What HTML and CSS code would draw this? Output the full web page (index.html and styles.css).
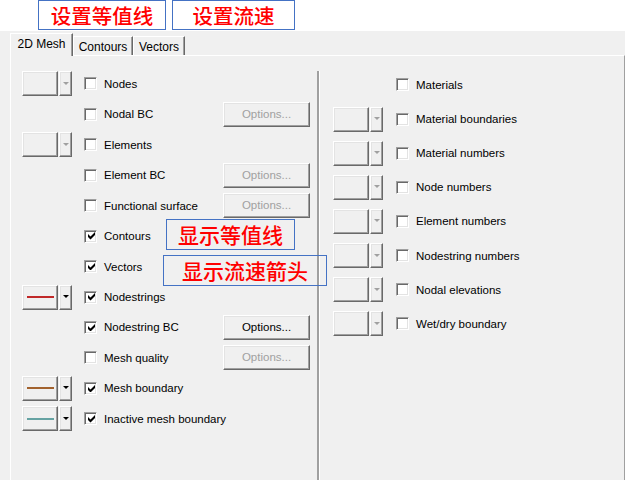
FILE: index.html
```html
<!DOCTYPE html>
<html>
<head>
<meta charset="utf-8">
<link rel="stylesheet" href="styles.css">
</head>
<body>
<div class="top">
  <div class="note note-a">设置等值线</div>
  <div class="note note-b">设置流速</div>
</div>
<div class="dialog">
  <div class="tabs">
    <div class="tab tab-active tab-mesh">2D Mesh</div>
    <div class="tab tab-contours">Contours</div>
    <div class="tab tab-vectors">Vectors</div>
  </div>
  <div class="panel">
    <div class="col-left">
      <div class="row">
        <div class="cbtn"><div class="cbtn-main"></div><div class="cbtn-arrow"><span class="tri tri-off"></span></div></div>
        <div class="check"><span class="box"></span><span class="lbl">Nodes</span></div>
        <div></div>
      </div>
      <div class="row">
        <div></div>
        <div class="check"><span class="box"></span><span class="lbl">Nodal BC</span></div>
        <div class="btn btn-off">Options...</div>
      </div>
      <div class="row">
        <div class="cbtn"><div class="cbtn-main"></div><div class="cbtn-arrow"><span class="tri tri-off"></span></div></div>
        <div class="check"><span class="box"></span><span class="lbl">Elements</span></div>
        <div></div>
      </div>
      <div class="row">
        <div></div>
        <div class="check"><span class="box"></span><span class="lbl">Element BC</span></div>
        <div class="btn btn-off">Options...</div>
      </div>
      <div class="row">
        <div></div>
        <div class="check"><span class="box"></span><span class="lbl">Functional surface</span></div>
        <div class="btn btn-off">Options...</div>
      </div>
      <div class="row">
        <div></div>
        <div class="check"><span class="box box-on"><svg viewBox="0 0 7 7.5" width="7" height="7.5"><polygon points="0,2 2.5,4.5 7,0 7,3 2.5,7.5 0,5" fill="#000"/></svg></span><span class="lbl">Contours</span></div>
        <div></div>
      </div>
      <div class="row">
        <div></div>
        <div class="check"><span class="box box-on"><svg viewBox="0 0 7 7.5" width="7" height="7.5"><polygon points="0,2 2.5,4.5 7,0 7,3 2.5,7.5 0,5" fill="#000"/></svg></span><span class="lbl">Vectors</span></div>
        <div></div>
      </div>
      <div class="row">
        <div class="cbtn"><div class="cbtn-main"><span class="swatch swatch-red"></span></div><div class="cbtn-arrow"><span class="tri"></span></div></div>
        <div class="check"><span class="box box-on"><svg viewBox="0 0 7 7.5" width="7" height="7.5"><polygon points="0,2 2.5,4.5 7,0 7,3 2.5,7.5 0,5" fill="#000"/></svg></span><span class="lbl">Nodestrings</span></div>
        <div></div>
      </div>
      <div class="row">
        <div></div>
        <div class="check"><span class="box box-on"><svg viewBox="0 0 7 7.5" width="7" height="7.5"><polygon points="0,2 2.5,4.5 7,0 7,3 2.5,7.5 0,5" fill="#000"/></svg></span><span class="lbl">Nodestring BC</span></div>
        <div class="btn">Options...</div>
      </div>
      <div class="row">
        <div></div>
        <div class="check"><span class="box"></span><span class="lbl">Mesh quality</span></div>
        <div class="btn btn-off">Options...</div>
      </div>
      <div class="row">
        <div class="cbtn"><div class="cbtn-main"><span class="swatch swatch-brown"></span></div><div class="cbtn-arrow"><span class="tri"></span></div></div>
        <div class="check"><span class="box box-on"><svg viewBox="0 0 7 7.5" width="7" height="7.5"><polygon points="0,2 2.5,4.5 7,0 7,3 2.5,7.5 0,5" fill="#000"/></svg></span><span class="lbl">Mesh boundary</span></div>
        <div></div>
      </div>
      <div class="row">
        <div class="cbtn"><div class="cbtn-main"><span class="swatch swatch-teal"></span></div><div class="cbtn-arrow"><span class="tri"></span></div></div>
        <div class="check"><span class="box box-on"><svg viewBox="0 0 7 7.5" width="7" height="7.5"><polygon points="0,2 2.5,4.5 7,0 7,3 2.5,7.5 0,5" fill="#000"/></svg></span><span class="lbl">Inactive mesh boundary</span></div>
        <div></div>
      </div>
    </div>
    <div class="divider"></div>
    <div class="col-right">
      <div class="rrow">
        <div></div>
        <div class="check"><span class="box"></span><span class="lbl">Materials</span></div>
      </div>
      <div class="rrow">
        <div class="cbtn"><div class="cbtn-main"></div><div class="cbtn-arrow"><span class="tri tri-off"></span></div></div>
        <div class="check"><span class="box"></span><span class="lbl">Material boundaries</span></div>
      </div>
      <div class="rrow">
        <div class="cbtn"><div class="cbtn-main"></div><div class="cbtn-arrow"><span class="tri tri-off"></span></div></div>
        <div class="check"><span class="box"></span><span class="lbl">Material numbers</span></div>
      </div>
      <div class="rrow">
        <div class="cbtn"><div class="cbtn-main"></div><div class="cbtn-arrow"><span class="tri tri-off"></span></div></div>
        <div class="check"><span class="box"></span><span class="lbl">Node numbers</span></div>
      </div>
      <div class="rrow">
        <div class="cbtn"><div class="cbtn-main"></div><div class="cbtn-arrow"><span class="tri tri-off"></span></div></div>
        <div class="check"><span class="box"></span><span class="lbl">Element numbers</span></div>
      </div>
      <div class="rrow">
        <div class="cbtn"><div class="cbtn-main"></div><div class="cbtn-arrow"><span class="tri tri-off"></span></div></div>
        <div class="check"><span class="box"></span><span class="lbl">Nodestring numbers</span></div>
      </div>
      <div class="rrow">
        <div class="cbtn"><div class="cbtn-main"></div><div class="cbtn-arrow"><span class="tri tri-off"></span></div></div>
        <div class="check"><span class="box"></span><span class="lbl">Nodal elevations</span></div>
      </div>
      <div class="rrow">
        <div class="cbtn"><div class="cbtn-main"></div><div class="cbtn-arrow"><span class="tri tri-off"></span></div></div>
        <div class="check"><span class="box"></span><span class="lbl">Wet/dry boundary</span></div>
      </div>
    </div>
    <div class="callout callout-contours">显示等值线</div>
    <div class="callout callout-vectors">显示流速箭头</div>
  </div>
</div>
</body>
</html>
```
FILE: styles.css
```css
* { box-sizing: border-box; }
html, body {
  margin: 0;
  padding: 0;
}
body {
  width: 625px;
  height: 480px;
  overflow: hidden;
  background: #f0f0f0;
  font-family: "Liberation Sans", Arial, sans-serif;
  font-size: 11.5px;
  color: #000;
}
.top {
  height: 31px;
  background: #fff;
  display: flex;
  padding-left: 38px;
  gap: 6px;
}
.note {
  height: 30px;
  border: 1px solid #4472c4;
  display: flex;
  align-items: center;
  justify-content: center;
  color: #ff0000;
  font-family: "Noto Sans CJK SC", sans-serif;
  font-size: 20.5px;
  font-weight: 500;
  line-height: 1;
}
.note-a { width: 128px; }
.note-b { width: 123px; }

.dialog {
  padding-left: 10px;
  padding-top: 2px;
}
.tabs {
  display: flex;
  align-items: flex-end;
  height: 22px;
  position: relative;
  z-index: 2;
}
.tab {
  height: 19px;
  display: flex;
  align-items: center;
  justify-content: center;
  background: #f0f0f0;
  border-top: 1px solid #fff;
  border-left: 1px solid #fff;
  border-right: 1px solid #696969;
  box-shadow: inset -1px 0 0 #a0a0a0;
  padding-top: 1px;
  font-size: 12px;
}
.tab-active {
  height: 23px;
  margin-bottom: -1px;
  padding-top: 0;
  padding-bottom: 2px;
}
.tab-mesh { width: 63px; }
.tab-contours { width: 60px; }
.tab-vectors { width: 52px; }

.panel {
  position: relative;
  height: 425px;
  width: 615px;
  border-top: 1px solid #fff;
  border-left: 1px solid #fff;
  border-right: 1px solid #a0a0a0;
  display: flex;
  align-items: flex-start;
}
.col-left {
  width: 306px;
  padding-left: 11px;
  padding-top: 12.75px;
}
.row {
  display: grid;
  grid-template-columns: 62px 139px 87px;
  height: 30.45px;
  align-items: center;
}
.divider {
  margin-top: 15px;
  width: 3px;
  height: 420px;
  border-left: 2px solid #a0a0a0;
  border-right: 1px solid #fff;
}
.col-right {
  padding-left: 13px;
  padding-top: 11.9px;
  flex: 1;
}
.rrow {
  display: grid;
  grid-template-columns: 63px 1fr;
  height: 34.14px;
  align-items: center;
}
.check {
  display: flex;
  align-items: center;
}
.box {
  width: 13px;
  height: 13px;
  background: #fff;
  border: 1px solid;
  border-color: #a0a0a0 #fff #fff #a0a0a0;
  box-shadow: inset 1px 1px 0 #696969, inset -1px -1px 0 #e3e3e3;
  display: flex;
  align-items: center;
  justify-content: center;
  flex: none;
}
.box svg { display: block; margin-left: 1px; }
.lbl {
  margin-left: 7px;
  white-space: nowrap;
}
.btn {
  width: 87px;
  height: 25px;
  display: flex;
  align-items: center;
  justify-content: center;
  background: #f0f0f0;
  border: 1px solid;
  border-color: #fff #696969 #696969 #fff;
  box-shadow: inset -1px -1px 0 #a0a0a0, inset 1px 1px 0 #e3e3e3;
  padding-bottom: 1px;
}
.btn-off {
  color: #a0a0a0;
}
.cbtn {
  display: flex;
  gap: 1px;
  height: 25px;
  width: 50px;
}
.cbtn-main, .cbtn-arrow {
  height: 25px;
  background: #f0f0f0;
  border: 1px solid;
  border-color: #fff #696969 #696969 #fff;
  box-shadow: inset -1px -1px 0 #a0a0a0, inset 1px 1px 0 #e3e3e3;
  display: flex;
  align-items: center;
  justify-content: center;
}
.cbtn-main { width: 36px; }
.cbtn-arrow { width: 13px; }
.tri {
  width: 0;
  height: 0;
  border-left: 3px solid transparent;
  border-right: 3px solid transparent;
  border-top: 3px solid #000;
  margin-top: -1px;
}
.tri-off { border-top-color: #a0a0a0; }
.swatch {
  width: 27px;
  height: 2px;
  margin-left: 1px;
}
.swatch-red { background: #c02828; height: 1.5px; }
.swatch-brown { background: #a2622e; }
.swatch-teal { background: #66a3a3; }

.callout {
  position: absolute;
  border: 1px solid #4472c4;
  display: flex;
  align-items: center;
  justify-content: center;
  color: #ff0000;
  font-family: "Noto Sans CJK SC", sans-serif;
  font-size: 21px;
  font-weight: 500;
  line-height: 1;
}
.callout-contours {
  left: 155px;
  top: 163px;
  width: 129px;
  height: 31px;
}
.callout-vectors {
  left: 152px;
  top: 199px;
  width: 164px;
  height: 31px;
}
```
